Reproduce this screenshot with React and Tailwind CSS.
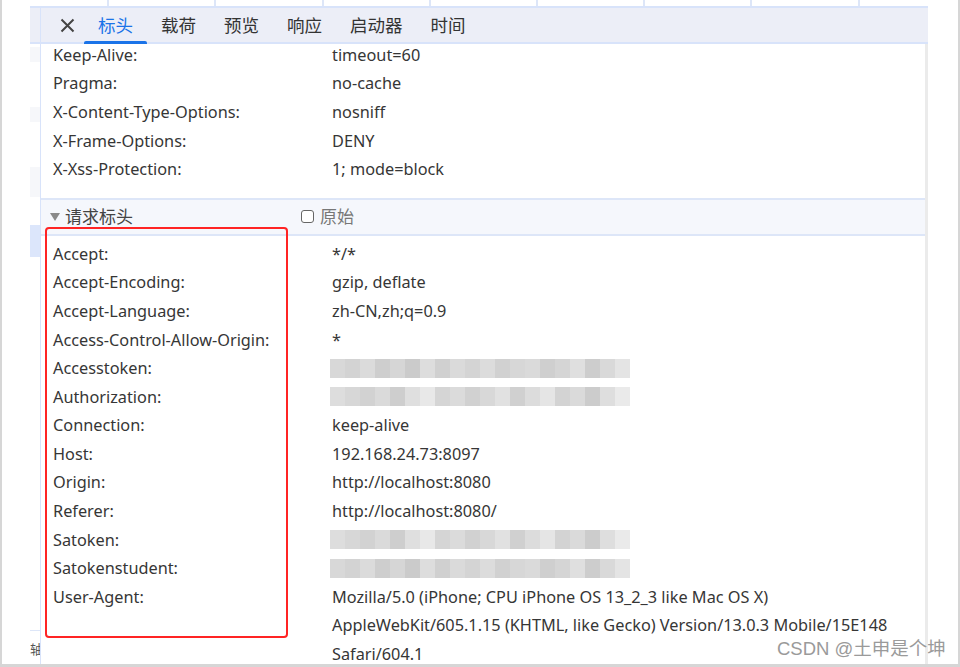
import React from 'react';

const responseHeaders = [
    ['Keep-Alive:', 'timeout=60'],
    ['Pragma:', 'no-cache'],
    ['X-Content-Type-Options:', 'nosniff'],
    ['X-Frame-Options:', 'DENY'],
    ['X-Xss-Protection:', '1; mode=block'],
];

const blurA = ['bg-[#d4d4d4]', 'bg-[#cfcfcf]', 'bg-[#d8d8d8]', 'bg-[#c9c9c9]', 'bg-[#d2d2d2]', 'bg-[#c6c6c6]', 'bg-[#dadada]', 'bg-[#cbcbcb]', 'bg-[#d6d6d6]', 'bg-[#d0d0d0]', 'bg-[#d9d9d9]', 'bg-[#cdcdcd]', 'bg-[#d3d3d3]', 'bg-[#d7d7d7]', 'bg-[#cacaca]', 'bg-[#d1d1d1]', 'bg-[#dcdcdc]', 'bg-[#c8c8c8]', 'bg-[#d5d5d5]', 'bg-[#e2e2e2]'];
const blurB = ['bg-[#dadada]', 'bg-[#d3d3d3]', 'bg-[#cecece]', 'bg-[#d6d6d6]', 'bg-[#c9c9c9]', 'bg-[#dcdcdc]', 'bg-[#e6e6e6]', 'bg-[#d1d1d1]', 'bg-[#d8d8d8]', 'bg-[#cdcdcd]', 'bg-[#d4d4d4]', 'bg-[#dedede]', 'bg-[#cbcbcb]', 'bg-[#d9d9d9]', 'bg-[#e3e3e3]', 'bg-[#cfcfcf]', 'bg-[#d7d7d7]', 'bg-[#c7c7c7]', 'bg-[#dbdbdb]', 'bg-[#e8e8e8]'];

const Blur = ({ shades }) => (
    <div className="flex h-[19px] w-[300px] -ml-[2px] opacity-90">
        {shades.map((c, i) => (
            <div key={i} className={`flex-1 ${c}`}></div>
        ))}
    </div>
);

const requestHeaders = [
    ['Accept:', '*/*'],
    ['Accept-Encoding:', 'gzip, deflate'],
    ['Accept-Language:', 'zh-CN,zh;q=0.9'],
    ['Access-Control-Allow-Origin:', '*'],
    ['Accesstoken:', <Blur shades={blurA} />],
    ['Authorization:', <Blur shades={blurB} />],
    ['Connection:', 'keep-alive'],
    ['Host:', '192.168.24.73:8097'],
    ['Origin:', 'http://localhost:8080'],
    ['Referer:', 'http://localhost:8080/'],
    ['Satoken:', <Blur shades={blurB} />],
    ['Satokenstudent:', <Blur shades={blurA} />],
];

const tabs = ['标头', '载荷', '预览', '响应', '启动器', '时间'];

const Row = ({ name, value }) => (
    <div className="flex h-[28.6px] items-center">
        <div className="w-[279px] shrink-0">{name}</div>
        <div className="flex-1">{value}</div>
    </div>
);

const App = () => {
    return (
        <div
            className="relative w-[960px] h-[667px] overflow-hidden bg-white border-l-2 border-r-2 border-b-[3px] border-[#d6d6d6] flex flex-col text-[#363636]"
            style={{ fontFamily: '"Noto Sans", "Noto Sans CJK SC", sans-serif' }}
        >
            {/* network table header remnants */}
            <div className="flex h-[6px] shrink-0">
                {[0, 1, 2, 3, 4, 5, 6, 7].map(i => (
                    <div key={i} className="w-[107.2px] shrink-0 border-r-2 border-[#dde6f8]"></div>
                ))}
            </div>

            <div className="flex flex-1 min-h-0">
                <div className="w-[28px] shrink-0"></div>

                {/* request list strip */}
                <div className="w-[10px] shrink-0 flex flex-col relative">
                    <div className="h-[38px] bg-[#eceef7] border-t-2 border-b-2 border-[#d8e3fa]"></div>
                    <div className="h-[3px]"></div>
                    <div className="h-[15px] bg-[#f6f7fa]"></div>
                    <div className="h-[45px]"></div>
                    <div className="h-[15px] bg-[#f6f7fa]"></div>
                    <div className="h-[45px]"></div>
                    <div className="h-[30px] bg-[#f6f7fa]"></div>
                    <div className="h-[28px]"></div>
                    <div className="h-[32px] bg-[#dce6fb]"></div>
                    <div className="flex-1"></div>
                    <div className="h-[1px] bg-[#dde6f8]"></div>
                    <div className="h-[33px] overflow-hidden text-[13px] leading-[30px] text-[#555] pt-[3px]">轴</div>
                </div>

                {/* details panel */}
                <div className="w-[888px] shrink-0 flex flex-col border-l border-[#d8e3fa]">
                    <div className="h-[38px] shrink-0 bg-[#eceef7] border-t-2 border-b-2 border-[#d8e3fa] flex items-stretch pl-[10px]">
                        <button className="w-[32px] flex items-center justify-center text-[#444]">
                            <svg width="15" height="15" viewBox="0 0 15 15" fill="none" stroke="currentColor" strokeWidth="2">
                                <path d="M1.5 1.5L13.5 13.5M13.5 1.5L1.5 13.5" />
                            </svg>
                        </button>
                        <div className="flex ml-[1px]">
                            {tabs.map((t, i) => (
                                <div
                                    key={t}
                                    className={`relative px-[14px] flex items-center text-[17.5px] ${i === 0 ? 'text-[#1a73e8]' : 'text-[#333]'}`}
                                >
                                    {t}
                                    {i === 0 && (
                                        <div className="absolute left-0 right-0 -bottom-[2px] h-[3px] bg-[#1a73e8] rounded-t-[2px]"></div>
                                    )}
                                </div>
                            ))}
                        </div>
                    </div>

                    <div className="flex-1 min-h-0 overflow-hidden border-r-[3px] border-[#ebebeb] text-[16.3px]">
                        <div className="-mt-[3.3px] pl-[12px] pb-[14.3px]">
                            {responseHeaders.map(([n, v]) => (
                                <Row key={n} name={n} value={v} />
                            ))}
                        </div>

                        <div className="h-[38px] bg-[#f5f7fc] border-t-2 border-b-2 border-[#dde6f8] flex items-center">
                            <div className="w-[260px] pl-[9px] flex items-center gap-[5px]">
                                <svg width="10" height="8" viewBox="0 0 10 8" className="mt-[1px]">
                                    <path d="M0 0H10L5 8Z" fill="#8a8a8a" />
                                </svg>
                                <span className="text-[17px] text-[#444]">请求标头</span>
                            </div>
                            <div className="flex items-center gap-[6px]">
                                <div className="w-[13px] h-[13px] border-[1.5px] border-[#666] rounded-[3px] bg-white"></div>
                                <span className="text-[17px] text-[#777]">原始</span>
                            </div>
                        </div>

                        <div className="pt-[3.7px] pl-[12px]">
                            {requestHeaders.map(([n, v]) => (
                                <Row key={n} name={n} value={v} />
                            ))}
                            <div className="flex">
                                <div className="w-[279px] shrink-0 leading-[28.6px]">User-Agent:</div>
                                <div className="flex-1 leading-[28.6px]">
                                    <div>Mozilla/5.0 (iPhone; CPU iPhone OS 13_2_3 like Mac OS X)</div>
                                    <div className="whitespace-nowrap">AppleWebKit/605.1.15 (KHTML, like Gecko) Version/13.0.3 Mobile/15E148</div>
                                    <div>Safari/604.1</div>
                                </div>
                            </div>
                        </div>
                    </div>
                </div>

                <div className="flex-1"></div>
            </div>

            {/* annotation box */}
            <div className="absolute left-[43px] top-[227px] w-[243px] h-[411px] border-2 border-[#ff2424] rounded-[4px] pointer-events-none"></div>

            {/* watermark */}
            <div
                className="absolute left-[775px] top-[635px] text-[18.5px] text-[#9a9a9a] whitespace-nowrap"
                style={{ fontFamily: '"Liberation Sans", "Noto Sans CJK SC", sans-serif' }}
            >
                CSDN @土申是个坤
            </div>
        </div>
    );
};

export default App;
